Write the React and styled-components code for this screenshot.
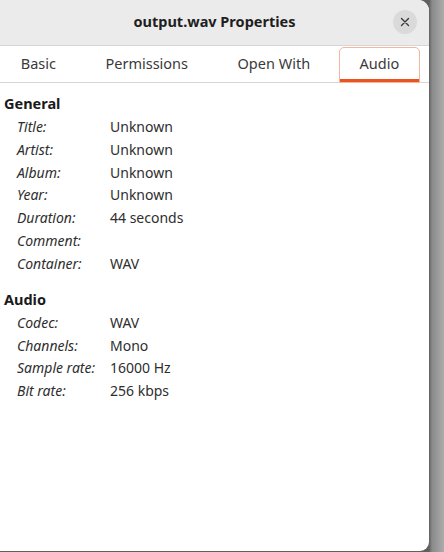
import React from 'react';
import styled, { createGlobalStyle } from 'styled-components';

const GlobalStyle = createGlobalStyle`
  html, body {
    margin: 0;
    padding: 0;
    width: 444px;
    height: 552px;
    overflow: hidden;
    background: linear-gradient(to right, #5f5f5f 0px, #5f5f5f 429px, #8a8a8a 432px, #acacac 444px);
  }
  * { box-sizing: border-box; }
`;

const general = [
  ['Title:', 'Unknown'],
  ['Artist:', 'Unknown'],
  ['Album:', 'Unknown'],
  ['Year:', 'Unknown'],
  ['Duration:', '44 seconds'],
  ['Comment:', ''],
  ['Container:', 'WAV'],
];

const audio = [
  ['Codec:', 'WAV'],
  ['Channels:', 'Mono'],
  ['Sample rate:', '16000 Hz'],
  ['Bit rate:', '256 kbps'],
];

const tabs = ['Basic', 'Permissions', 'Open With', 'Audio'];

export default function App() {
  return (
    <>
      <GlobalStyle />
      <Window>
        <HeaderBar>
          <Title>output.wav Properties</Title>
          <CloseButton aria-label="Close">
            <svg width="10" height="10" viewBox="0 0 10 10">
              <path d="M1.5 1.5 L8.5 8.5 M8.5 1.5 L1.5 8.5" stroke="#3a3a3a" strokeWidth="1.4" strokeLinecap="round" />
            </svg>
          </CloseButton>
        </HeaderBar>
        <TabBar>
          {tabs.map((t) => (
            <Tab key={t} $active={t === 'Audio'}>{t}</Tab>
          ))}
        </TabBar>
        <Content>
          <Section title="General" rows={general} />
          <Section title="Audio" rows={audio} />
        </Content>
      </Window>
    </>
  );
}

const Section = ({ title, rows }) => (
  <SectionWrap>
    <Heading>{title}</Heading>
    <Grid>
      {rows.map(([label, value]) => (
        <React.Fragment key={label}>
          <Label>{label}</Label>
          <Value>{value}</Value>
        </React.Fragment>
      ))}
    </Grid>
  </SectionWrap>
);

const Window = styled.div`
  width: 429px;
  height: 551px;
  background: #fff;
  border-radius: 0 11px 9px 0;
  overflow: hidden;
  display: flex;
  flex-direction: column;
  font-family: 'Noto Sans', 'Open Sans', sans-serif;
  font-size: 14px;
  color: #2e2e2e;
`;

const HeaderBar = styled.div`
  height: 46px;
  flex: none;
  background: #ebebeb;
  border-bottom: 1px solid #d6d6d6;
  display: flex;
  align-items: center;
  justify-content: center;
  position: relative;
`;

const Title = styled.div`
  font-weight: 700;
  font-size: 14.5px;
  color: #1e1e1e;
  margin-top: -3px;
`;

const CloseButton = styled.button`
  position: absolute;
  right: 12px;
  top: 10px;
  width: 24px;
  height: 24px;
  border-radius: 50%;
  border: none;
  background: #dadada;
  padding: 0;
  display: flex;
  align-items: center;
  justify-content: center;
`;

const TabBar = styled.div`
  height: 37px;
  flex: none;
  display: flex;
  align-items: stretch;
  border-bottom: 1px solid #d6d6d6;
  padding: 1px 9px 0 0;
  gap: 8px;
`;

const Tab = styled.div`
  flex: 1 0 auto;
  display: flex;
  align-items: center;
  justify-content: center;
  color: #3a3a3a;
  font-size: 14.5px;
  padding-bottom: 4px;
  border-radius: 5px 5px 0 0;
  border: 1px solid ${(p) => (p.$active ? '#f4b59a' : 'transparent')};
  box-shadow: ${(p) => (p.$active ? 'inset 0 -3px 0 #e95420' : 'none')};
  margin-bottom: -1px;
`;

const Content = styled.div`
  padding: 10px 0 0 4px;
  display: flex;
  flex-direction: column;
  gap: 15px;
`;

const SectionWrap = styled.div`
  display: flex;
  flex-direction: column;
`;

const Heading = styled.div`
  font-weight: 700;
  font-size: 14.5px;
  color: #1a1a1a;
  line-height: 20px;
  margin-bottom: 4px;
`;

const Grid = styled.div`
  display: grid;
  grid-template-columns: 93px 1fr;
  padding-left: 13px;
  row-gap: 2.8px;
  line-height: 20px;
`;

const Label = styled.div`
  font-style: italic;
  color: #2e2e2e;
`;

const Value = styled.div`
  color: #2e2e2e;
  min-height: 20px;
`;
